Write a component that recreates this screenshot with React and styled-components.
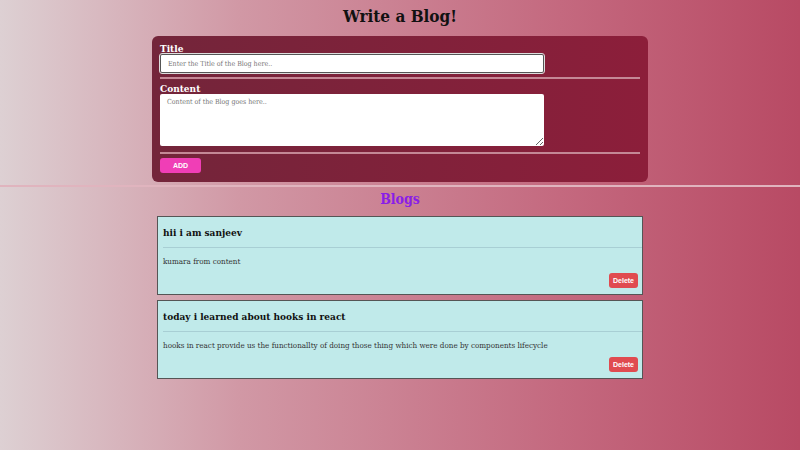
import React from 'react';
import styled, { createGlobalStyle } from 'styled-components';

const Global = createGlobalStyle`
  html, body {
    margin: 0;
    padding: 0;
  }
  body {
    min-height: 450px;
    background: linear-gradient(to right, #ddd0d3, #d198a5 30%, #c4697f 70%, #b84a64);
    font-family: "DejaVu Serif Condensed", "Liberation Serif", serif;
  }
`;

const Page = styled.div`
  display: flex;
  flex-direction: column;
  align-items: center;
  padding-top: 5px;
`;

const Heading = styled.h1`
  margin: 0 0 9px;
  font-size: 17px;
  font-weight: bold;
  color: #111;
  line-height: 22px;
`;

const Form = styled.form`
  box-sizing: border-box;
  width: 496px;
  padding: 7px 8px 9px;
  border-radius: 6px;
  background: linear-gradient(to right, #73253a, #8c1e3a);
  display: flex;
  flex-direction: column;
`;

const Label = styled.label`
  color: #fff;
  font-size: 10px;
  font-weight: bold;
  line-height: 11px;
`;

const TitleInput = styled.input`
  box-sizing: border-box;
  width: 384px;
  height: 19px;
  padding: 0 7px;
  border: 1px solid #555;
  border-radius: 2px;
  font-family: inherit;
  font-size: 7px;
  outline: 1px solid #ddd;
  &::placeholder { color: #777; }
`;

const ContentInput = styled.textarea`
  box-sizing: border-box;
  width: 384px;
  height: 52px;
  padding: 4px 7px;
  border: none;
  border-radius: 2px;
  font-family: inherit;
  font-size: 7px;
  &::placeholder { color: #777; }
`;

const Rule = styled.hr`
  width: 100%;
  margin: ${(p) => p.$m || '4px 0'};
  border: none;
  border-top: 2px solid #c48896;
`;

const AddButton = styled.button`
  width: 41px;
  height: 15px;
  padding: 0;
  border: none;
  border-radius: 3px;
  background: #f03eb6;
  color: #fff;
  font-family: "Liberation Sans", Arial, sans-serif;
  font-weight: bold;
  font-size: 7px;
`;

const PageRule = styled.hr`
  align-self: stretch;
  margin: 3px 0 0;
  border: none;
  border-top: 2px solid #e0b4be;
`;

const BlogsHeading = styled.h2`
  margin: 4px 0 9px;
  font-size: 14px;
  line-height: 16px;
  color: #8a1ee6;
`;

const Card = styled.div`
  box-sizing: border-box;
  width: 486px;
  height: 79px;
  margin-bottom: 5px;
  border: 1px solid #555;
  background: #c0eaea;
  padding-left: 5px;
  display: flex;
  flex-direction: column;
`;

const CardTitle = styled.h3`
  margin: 9px 0 0;
  font-size: 10px;
  line-height: 13px;
  color: #111;
`;

const CardRule = styled.hr`
  margin: 8px 0 0;
  border: none;
  border-top: 1px solid #a8cfd4;
`;

const CardText = styled.p`
  margin: 9px 0 0;
  font-size: 8px;
  line-height: 10px;
  color: #333;
`;

const CardFooter = styled.div`
  display: flex;
  justify-content: flex-end;
  padding-right: 4px;
  margin-top: auto;
  margin-bottom: 6px;
`;

const DeleteButton = styled.button`
  width: 29px;
  height: 15px;
  padding: 0;
  border: none;
  border-radius: 3px;
  background: #e04b50;
  color: #fff;
  font-family: "Liberation Sans", Arial, sans-serif;
  font-weight: bold;
  font-size: 7px;
`;

const blogs = [
  { title: 'hii i am sanjeev', content: 'kumara from content' },
  {
    title: 'today i learned about hooks in react',
    content:
      'hooks in react provide us the functionallty of doing those thing which were done by components lifecycle',
  },
];

export default function App() {
  return (
    <>
      <Global />
      <Page>
        <Heading>Write a Blog!</Heading>
        <Form onSubmit={(e) => e.preventDefault()}>
          <Label>Title</Label>
          <TitleInput placeholder="Enter the Title of the Blog here.." />
          <Rule />
          <Label>Content</Label>
          <ContentInput placeholder="Content of the Blog goes here.." />
          <Rule $m="6px 0 4px" />
          <AddButton>ADD</AddButton>
        </Form>
        <PageRule />
        <BlogsHeading>Blogs</BlogsHeading>
        {blogs.map((b) => (
          <Card key={b.title}>
            <CardTitle>{b.title}</CardTitle>
            <CardRule />
            <CardText>{b.content}</CardText>
            <CardFooter>
              <DeleteButton>Delete</DeleteButton>
            </CardFooter>
          </Card>
        ))}
      </Page>
    </>
  );
}
